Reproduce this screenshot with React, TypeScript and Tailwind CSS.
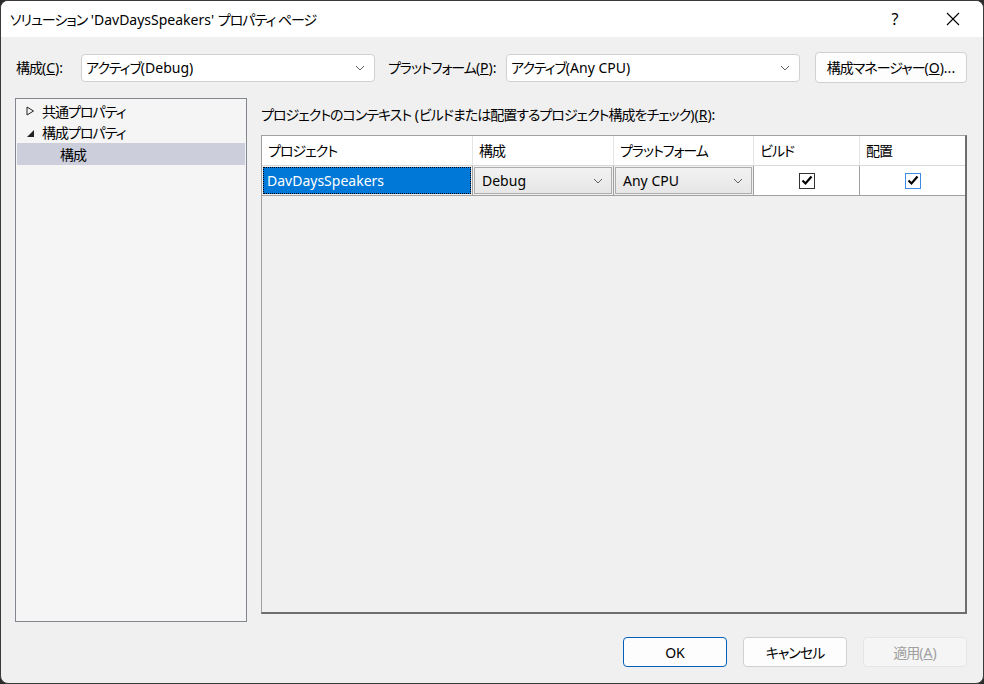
import React from 'react';

// Japanese runs render a bit wider than the original UI font, so tighten them
function Jp({ children }: { children: React.ReactNode }) {
  return <span className="tracking-[-1px]">{children}</span>;
}

function Chevron() {
  return (
    <svg width="10" height="6" viewBox="0 0 10 6">
      <polyline points="1,1 5,5 9,1" fill="none" stroke="#606060" strokeWidth="1" />
    </svg>
  );
}

function Check({ focused }: { focused?: boolean }) {
  return (
    <div
      className={
        'w-[16px] h-[16px] bg-white border flex items-center justify-center ' +
        (focused ? 'border-[#3c8ce7]' : 'border-[#333333]')
      }
    >
      <svg width="12" height="11" viewBox="0 0 12 11">
        <polyline points="1.5,5.5 4.5,8.5 10.5,1.5" fill="none" stroke="#000" strokeWidth="2.2" />
      </svg>
    </div>
  );
}

function Combo({ children }: { children: React.ReactNode }) {
  return (
    <div className="w-[294px] h-[28px] bg-white border border-[#d0d0d0] rounded-[4px] flex items-center justify-between pl-[4px] pr-[9px]">
      <span>{children}</span>
      <Chevron />
    </div>
  );
}

export default function App() {
  return (
    <div className="w-[984px] h-[684px] bg-[#2b2b2b] font-['Noto_Sans','Noto_Sans_CJK_JP',sans-serif] [font-feature-settings:'palt'] text-[14px] text-black">
      <div className="w-full h-full rounded-[8px] overflow-hidden border border-[#3a3a3a] bg-[#f0f0f0] flex flex-col">
        {/* Title bar */}
        <div className="h-[36px] bg-white flex items-center shrink-0">
          <div className="pl-[9px] flex-1">
            <Jp>ソリューション</Jp> 'DavDaysSpeakers' <Jp>プロパティ ページ</Jp>
          </div>
          <div className="w-[58px] h-full flex items-center justify-center text-[16px]">?</div>
          <div className="w-[58px] h-full flex items-center justify-center mr-[1px]">
            <svg width="14" height="14" viewBox="0 0 14 14">
              <path d="M1 1 L13 13 M13 1 L1 13" stroke="#000" strokeWidth="1.1" />
            </svg>
          </div>
        </div>

        <div className="flex-1 flex flex-col pl-[14px] pr-[16px] pb-[16px]">
          {/* Config row */}
          <div className="flex items-center mt-[15px] h-[31px]">
            <div className="w-[66px] pl-[1px]">
              <Jp>構成</Jp>(<span className="underline">C</span>):
            </div>
            <Combo>
              <Jp>アクティブ</Jp>(Debug)
            </Combo>
            <div className="ml-[13px] w-[118px]">
              <Jp>プラットフォーム</Jp>(<span className="underline">P</span>):
            </div>
            <Combo>
              <Jp>アクティブ</Jp>(Any CPU)
            </Combo>
            <div className="ml-[15px] w-[152px] h-[31px] bg-[#fdfdfd] border border-[#d0d0d0] rounded-[4px] flex items-center justify-center">
              <Jp>構成マネージャー</Jp>(<span className="underline">O</span>)...
            </div>
          </div>

          {/* Main area */}
          <div className="flex mt-[15px] h-[524px]">
            <div className="w-[232px] h-full border border-[#82878f] bg-[#f5f5f5] pt-[1px] px-[1px]">
              <div className="h-[22px] flex items-center">
                <svg width="9" height="10" viewBox="0 0 9 10" className="ml-[9px] mr-[7px]">
                  <path d="M1 1 L7.5 5 L1 9 Z" fill="none" stroke="#222" strokeWidth="1" />
                </svg>
                <Jp>共通プロパティ</Jp>
              </div>
              <div className="h-[21px] flex items-center">
                <svg width="9" height="10" viewBox="0 0 9 10" className="ml-[9px] mr-[7px]">
                  <path d="M8 2 L8 9 L1 9 Z" fill="#222" />
                </svg>
                <Jp>構成プロパティ</Jp>
              </div>
              <div className="h-[22px] flex items-center bg-[#cccedb] pl-[43px]">
                <Jp>構成</Jp>
              </div>
            </div>

            <div className="flex-1 ml-[14px] flex flex-col pb-[8px]">
              <div className="h-[37px] pt-[6px]">
                <Jp>プロジェクトのコンテキスト</Jp> (<Jp>ビルドまたは配置するプロジェクト構成をチェック</Jp>)(
                <span className="underline">R</span>):
              </div>
              <div className="flex-1 border-t border-l border-[#a0a0a0] border-r-2 border-b-2 border-r-[#6d6d6d] border-b-[#6d6d6d] bg-[#f0f0f0]">
                {/* header */}
                <div className="flex h-[30px] bg-white border-b border-[#d8d8d8]">
                  <div className="w-[211px] border-r border-[#e5e5e5] pl-[6px] flex items-center">
                    <Jp>プロジェクト</Jp>
                  </div>
                  <div className="w-[141px] border-r border-[#e5e5e5] pl-[6px] flex items-center">
                    <Jp>構成</Jp>
                  </div>
                  <div className="w-[140px] border-r border-[#e5e5e5] pl-[6px] flex items-center">
                    <Jp>プラットフォーム</Jp>
                  </div>
                  <div className="w-[106px] border-r border-[#e5e5e5] pl-[6px] flex items-center">
                    <Jp>ビルド</Jp>
                  </div>
                  <div className="w-[105px] pl-[6px] flex items-center">
                    <Jp>配置</Jp>
                  </div>
                </div>
                {/* data row */}
                <div className="flex h-[30px] border-b border-[#a0a0a0]">
                  <div className="w-[211px] border-r border-[#a0a0a0] p-[1px]">
                    <div className="h-full bg-[#0078d7] border border-dotted border-black text-white pl-[3px] flex items-center">
                      DavDaysSpeakers
                    </div>
                  </div>
                  <div className="w-[141px] border-r border-[#a0a0a0] p-[1px]">
                    <div className="h-full bg-gradient-to-b from-[#f2f2f2] to-[#e6e6e6] border border-[#adadad] pl-[7px] pr-[8px] flex items-center justify-between">
                      <span>Debug</span>
                      <Chevron />
                    </div>
                  </div>
                  <div className="w-[140px] border-r border-[#a0a0a0] p-[1px]">
                    <div className="h-full bg-gradient-to-b from-[#f2f2f2] to-[#e6e6e6] border border-[#adadad] pl-[7px] pr-[8px] flex items-center justify-between">
                      <span>Any CPU</span>
                      <Chevron />
                    </div>
                  </div>
                  <div className="w-[106px] border-r border-[#a0a0a0] bg-white flex items-center justify-center">
                    <Check />
                  </div>
                  <div className="w-[105px] bg-white flex items-center justify-center">
                    <Check focused />
                  </div>
                </div>
              </div>
            </div>
          </div>

          {/* Buttons */}
          <div className="mt-auto flex justify-end gap-[16px]">
            <div className="w-[104px] h-[30px] bg-[#fdfdfd] border border-[#005fb8] rounded-[4px] flex items-center justify-center">
              OK
            </div>
            <div className="w-[104px] h-[30px] bg-[#fdfdfd] border border-[#d0d0d0] rounded-[4px] flex items-center justify-center">
              <Jp>キャンセル</Jp>
            </div>
            <div className="w-[104px] h-[30px] bg-[#f5f5f5] border border-[#e5e5e5] rounded-[4px] flex items-center justify-center text-[#a0a0a0]">
              <Jp>適用</Jp>(<span className="underline">A</span>)
            </div>
          </div>
        </div>
      </div>
    </div>
  );
}
